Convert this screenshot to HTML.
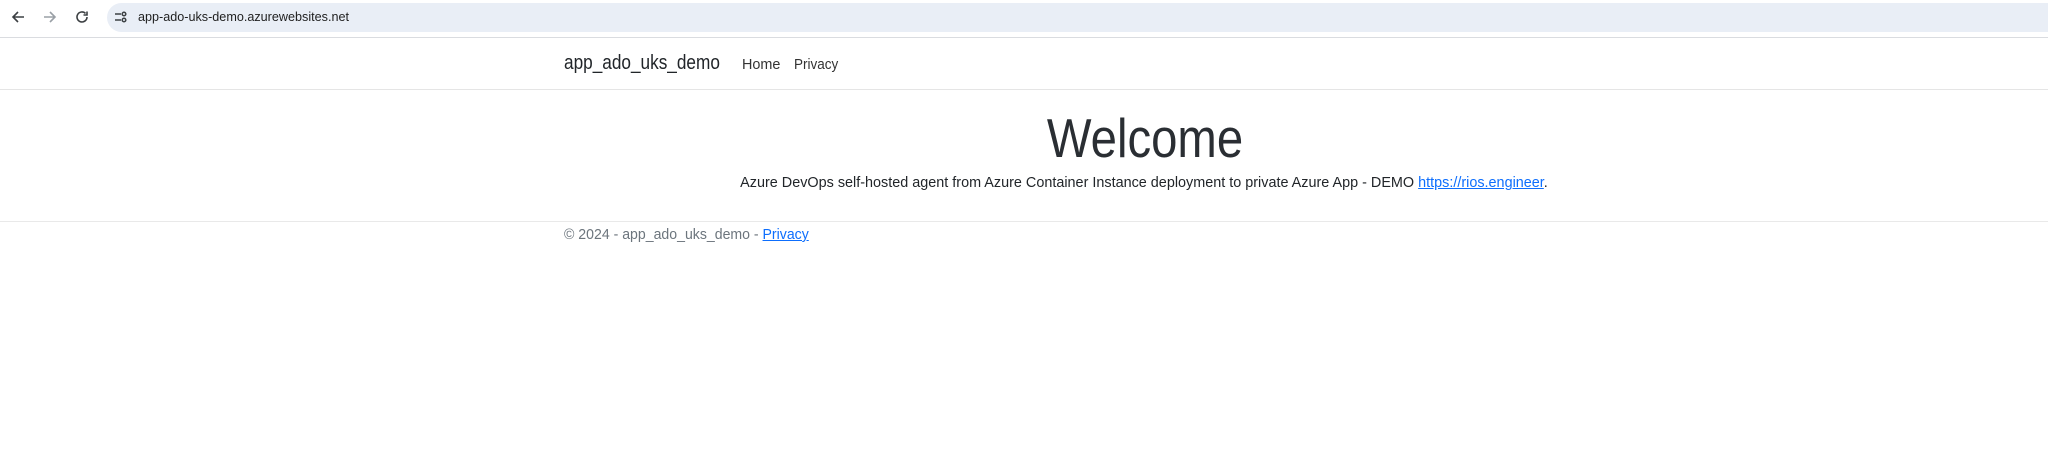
<!DOCTYPE html>
<html><head><meta charset="utf-8"><style>
*{margin:0;padding:0;box-sizing:border-box}
body{width:2048px;height:451px;background:#fff;font-family:"Liberation Sans",sans-serif;position:relative;overflow:hidden;color:#212529}
.a{position:absolute;white-space:nowrap}
#pill{position:absolute;left:107px;top:3px;width:1960px;height:29px;background:#e9eef6;border-radius:15px}
#sep{position:absolute;left:0;top:37px;width:2048px;height:1px;background:#dadce0}
#nb{position:absolute;left:0;top:89px;width:2048px;height:1px;background:#e5e5e5}
#fb{position:absolute;left:0;top:221px;width:2048px;height:1px;background:#e9e9e9}
a{color:#0d6efd;text-decoration:underline}
</style></head><body>
<div id="pill"></div>
<svg class="a" style="left:10px;top:9px" width="16" height="16" viewBox="0 0 16 16"><path d="M14 8H3M8 3L3 8l5 5" stroke="#3c4043" stroke-width="1.6" fill="none"/></svg>
<svg class="a" style="left:42px;top:9px" width="16" height="16" viewBox="0 0 16 16"><path d="M2 8h11M8 3l5 5-5 5" stroke="#9aa0a6" stroke-width="1.6" fill="none"/></svg>
<svg class="a" style="left:74px;top:9px" width="16" height="16" viewBox="0 0 16 16"><path d="M13 8a5 5 0 1 1-1.5-3.6M13 2.5v3.5H9.5" stroke="#3c4043" stroke-width="1.6" fill="none"/></svg>
<svg class="a" style="left:113px;top:9px" width="16" height="16" viewBox="0 0 16 16"><path d="M2 5h6M2 11h6" stroke="#3c4043" stroke-width="1.6"/><circle cx="11" cy="5" r="1.8" fill="none" stroke="#3c4043" stroke-width="1.5"/><circle cx="11" cy="11" r="1.8" fill="none" stroke="#3c4043" stroke-width="1.5"/></svg>
<div class="a" style="left:138px;top:9px;font-size:13px;color:#1f1f1f;transform:scaleX(0.97);transform-origin:left">app-ado-uks-demo.azurewebsites.net</div>
<div id="sep"></div>
<div class="a" style="left:564px;top:52px;font-size:20px;color:#212529;transform:scaleX(0.86);transform-origin:left">app_ado_uks_demo</div>
<div class="a" style="left:742px;top:56px;font-size:15px;color:#333;transform:scaleX(0.96);transform-origin:left">Home</div>
<div class="a" style="left:794px;top:56px;font-size:15px;color:#333;transform:scaleX(0.9);transform-origin:left">Privacy</div>
<div id="nb"></div>
<div class="a" style="left:1145px;top:106px;font-size:55px;color:#2a2e33;transform:translateX(-50%) scaleX(0.86);font-weight:300">Welcome</div>
<div class="a" style="left:1144px;top:174px;font-size:15px;transform:translateX(-50%) scaleX(0.96)">Azure DevOps self-hosted agent from Azure Container Instance deployment to private Azure App - DEMO <a>https://rios.engineer</a>.</div>
<div id="fb"></div>
<div class="a" style="left:564px;top:226px;font-size:15px;color:#6c757d;transform:scaleX(0.94);transform-origin:left">© 2024 - app_ado_uks_demo - <a>Privacy</a></div>
</body></html>
